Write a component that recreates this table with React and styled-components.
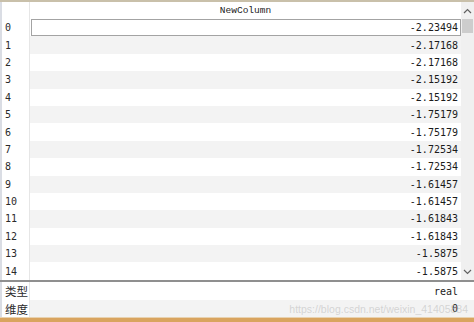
import React from "react";
import styled, { createGlobalStyle } from "styled-components";

const Global = createGlobalStyle`
  html, body { margin: 0; padding: 0; background: #fff; overflow: hidden; }
  #root { width: 474px; height: 322px; }
`;

const Frame = styled.div`
  position: relative;
  width: 474px;
  height: 322px;
  box-sizing: border-box;
  border-top: 2px solid #c9c0aa;
  display: flex;
  flex-direction: column;
  background: #fff;
  font-family: "DejaVu Sans Mono", "Liberation Mono", monospace;
  color: #1b1b1b;
  overflow: hidden;
`;

const TableArea = styled.div`
  display: flex;
  height: 278px;
`;

const Grid = styled.div`
  flex: 1;
  display: flex;
  flex-direction: column;
  border-left: 2px solid #dadde4;
`;

const Row = styled.div`
  display: flex;
  height: ${(p) => p.$h}px;
  flex: none;
`;

const IndexCell = styled.div`
  width: 28px;
  flex: none;
  box-sizing: border-box;
  border-right: 1px solid #e6e6e6;
  padding-left: 3px;
  display: flex;
  align-items: center;
  font-size: ${(p) => (p.$cjk ? "11.5px" : "10px")};
  font-family: ${(p) =>
    p.$cjk
      ? `"Noto Sans CJK SC", sans-serif`
      : `"DejaVu Sans Mono", "Liberation Mono", monospace`};
  color: #2a2a2a;
  background: #fff;
`;

const HeaderCell = styled.div`
  flex: 1;
  display: flex;
  align-items: center;
  justify-content: center;
  font-family: "Liberation Mono", monospace;
  font-size: 9.5px;
  color: #222;
`;

const DataCell = styled.div`
  flex: 1;
  box-sizing: border-box;
  display: flex;
  align-items: center;
  justify-content: flex-end;
  font-size: 10px;
  background: ${(p) => (p.$alt ? "#f3f3f3" : "#fff")};
  border: ${(p) => (p.$selected ? "1px solid #a3a3a3" : "none")};
  margin-left: ${(p) => (p.$selected ? "1px" : "0")};
  padding-right: ${(p) => (p.$selected ? "2px" : "3px")};
`;

const Scrollbar = styled.div`
  width: 13px;
  flex: none;
  background: #f0f0f0;
  display: flex;
  flex-direction: column;
`;

const ArrowBox = styled.div`
  height: 17px;
  display: flex;
  align-items: center;
  justify-content: center;
  flex: none;
`;

const Thumb = styled.div`
  height: 14px;
  margin: 0 1px;
  background: #cdcdcd;
  flex: none;
`;

const Track = styled.div`
  flex: 1;
`;

const Separator = styled.div`
  height: 2px;
  background: #8f8f8f;
  flex: none;
`;

const SummaryValue = styled(DataCell)`
  padding-right: 16px;
`;

const Strip = styled.div`
  flex: 1;
  background: #d9a45f;
  border-top: 1px solid #e8d2b0;
`;

const Watermark = styled.div`
  position: absolute;
  right: 6px;
  top: 301px;
  font-family: "Liberation Sans", sans-serif;
  font-size: 10.5px;
  color: rgba(185, 185, 185, 0.55);
  pointer-events: none;
  white-space: nowrap;
`;

const Chevron = ({ up }) => (
  <svg width="9" height="6" viewBox="0 0 9 6">
    <path
      d={up ? "M1 5 L4.5 1.5 L8 5" : "M1 1 L4.5 4.5 L8 1"}
      fill="none"
      stroke="#606060"
      strokeWidth="1.2"
    />
  </svg>
);

const values = [
  "-2.23494", "-2.17168", "-2.17168", "-2.15192", "-2.15192",
  "-1.75179", "-1.75179", "-1.72534", "-1.72534", "-1.61457",
  "-1.61457", "-1.61843", "-1.61843", "-1.5875", "-1.5875",
];

export default function App() {
  return (
    <>
      <Global />
      <Frame>
        <TableArea>
          <Grid>
            <Row $h={17}>
              <IndexCell />
              <HeaderCell>NewColumn</HeaderCell>
            </Row>
            {values.map((v, i) => (
              <Row key={i} $h={17.4}>
                <IndexCell>{i}</IndexCell>
                <DataCell $alt={i % 2 === 1} $selected={i === 0}>
                  {v}
                </DataCell>
              </Row>
            ))}
          </Grid>
          <Scrollbar>
            <ArrowBox>
              <Chevron up />
            </ArrowBox>
            <Thumb />
            <Track />
            <ArrowBox>
              <Chevron />
            </ArrowBox>
          </Scrollbar>
        </TableArea>
        <Separator />
        <Grid>
          <Row $h={18}>
            <IndexCell $cjk>类型</IndexCell>
            <SummaryValue>real</SummaryValue>
          </Row>
          <Row $h={17}>
            <IndexCell $cjk>维度</IndexCell>
            <SummaryValue $alt>0</SummaryValue>
          </Row>
        </Grid>
        <Strip />
        <Watermark>https://blog.csdn.net/weixin_41405884</Watermark>
      </Frame>
    </>
  );
}
